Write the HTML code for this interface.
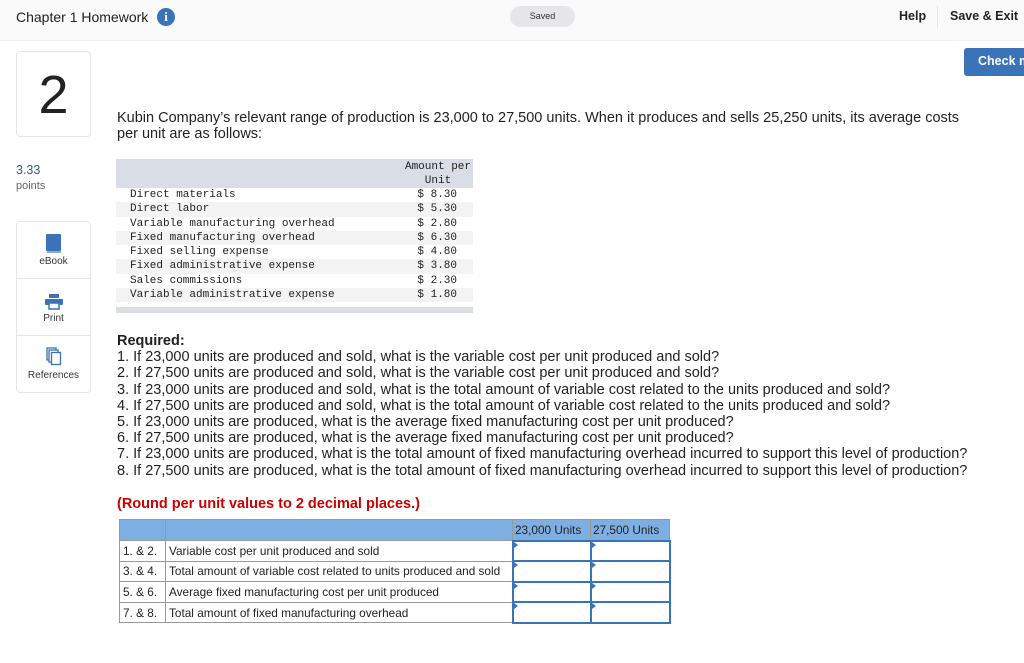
<!DOCTYPE html>
<html><head><meta charset="utf-8"><style>
*{margin:0;padding:0;box-sizing:border-box}
body{width:1024px;height:663px;background:#fff;font-family:"Liberation Sans",sans-serif;color:#222;position:relative;overflow:hidden}
.hdr{position:absolute;left:0;top:0;width:1024px;height:41px;background:#fafafa;border-bottom:1px solid #f0f0f0}
.abs{position:absolute;white-space:nowrap}
.qbox{position:absolute;left:16px;top:51px;width:75px;height:86px;border:1px solid #e6e6e6;border-radius:4px;text-align:center;font-size:54px;line-height:86px;color:#222}
.side{position:absolute;left:16px;top:221px;width:75px;height:172px;border:1px solid #e6e6e6;border-radius:4px}
.side div{height:57px;border-bottom:1px solid #e6e6e6;text-align:center;font-size:10px;color:#333;position:relative}
.side div:last-child{border-bottom:none}
.txt{font-size:14.5px;line-height:16.2px;color:#222}
.dt{position:absolute;left:116px;top:159px;width:357px;font-family:"Liberation Mono",monospace;font-size:11px;color:#222}
.dt .h{height:29px;background:#d9dde6;position:relative}
.dt .r{height:14.3px;line-height:14.3px;position:relative;padding-left:14px}
.dt .r.s{background:#f3f3f3}
.dt .r span{position:absolute;right:16px}
.at{position:absolute;left:119px;top:519px;border-collapse:collapse;font-size:11.8px;font-family:"Liberation Sans",Arial,sans-serif;color:#222;table-layout:fixed}
.at td{border:1px solid #999;height:20.6px;padding:0 3px;white-space:nowrap;overflow:hidden}
.at tr.hd td{background:#7eafe3;height:21px}
.at td.in{border:2px solid #3b73b9;position:relative;background:#fff}
.at td.in:before{content:"";position:absolute;left:0;top:0;border-left:4px solid #3b73b9;border-top:3px solid transparent;border-bottom:3px solid transparent}
</style></head><body>
<div class="hdr"></div>
<div class="abs" style="left:16px;top:9px;font-size:14px;color:#222">Chapter 1 Homework</div>
<div class="abs" style="left:157px;top:8px;width:18px;height:18px;border-radius:50%;background:#3b73b9;color:#fff;font-weight:bold;font-size:13px;text-align:center;line-height:18px;font-family:'Liberation Serif',serif">i</div>
<div class="abs" style="left:510px;top:6px;width:65px;height:21px;border-radius:11px;background:#e6e6e8;font-size:9px;text-align:center;line-height:21px;color:#333">Saved</div>
<div class="abs" style="left:899px;top:9px;font-size:12.5px;font-weight:bold;color:#222">Help</div>
<div class="abs" style="left:937px;top:6px;width:1px;height:22px;background:#e6e6e6"></div>
<div class="abs" style="left:950px;top:9px;font-size:12.5px;font-weight:bold;color:#222">Save &amp; Exit</div>
<div class="abs" style="left:964px;top:48px;width:70px;height:28px;background:#3b73b9;border-radius:3px;color:#fff;font-weight:bold;font-size:12.5px;line-height:27px;padding-left:14px">Check my</div>
<div class="qbox">2</div>
<div class="abs" style="left:16px;top:163px;font-size:12.5px;color:#2d5a96">3.33</div>
<div class="abs" style="left:16px;top:180px;font-size:11px;color:#666">points</div>
<div class="side">
<div><svg style="position:absolute;left:29px;top:12px" width="16" height="20" viewBox="0 0 16 20"><rect x="0" y="0" width="15" height="17" rx="1" fill="#3b73b9"/><rect x="1" y="17" width="14" height="2" fill="#3b73b9" opacity=".6"/></svg><span style="position:absolute;left:0;right:0;top:34px">eBook</span></div>
<div><svg style="position:absolute;left:28px;top:15px" width="18" height="16" viewBox="0 0 18 16"><rect x="4" y="0" width="10" height="4" fill="#3b73b9"/><rect x="0" y="5" width="18" height="6" rx="1" fill="#3b73b9"/><rect x="4" y="9" width="10" height="6" fill="#fff" stroke="#3b73b9" stroke-width="1.5"/></svg><span style="position:absolute;left:0;right:0;top:34px">Print</span></div>
<div><svg style="position:absolute;left:29px;top:11px" width="16" height="20" viewBox="0 0 16 20"><rect x="1" y="1" width="9" height="12" fill="#fff" stroke="#3b73b9" stroke-width="1.3"/><rect x="3" y="3" width="9" height="12" fill="#fff" stroke="#3b73b9" stroke-width="1.3"/><rect x="5.5" y="5.5" width="9" height="12" fill="#fff" stroke="#3b73b9" stroke-width="1.3"/></svg><span style="position:absolute;left:0;right:0;top:34px">References</span></div>
</div>
<div class="abs txt" style="left:117px;top:110px">Kubin Company’s relevant range of production is 23,000 to 27,500 units. When it produces and sells 25,250 units, its average costs<br>per unit are as follows:</div>
<div class="dt">
<div class="h"><div style="position:absolute;right:2px;top:1px;text-align:center;line-height:14px">Amount per<br>Unit</div></div>
<div class="r">Direct materials<span>$ 8.30</span></div>
<div class="r s">Direct labor<span>$ 5.30</span></div>
<div class="r">Variable manufacturing overhead<span>$ 2.80</span></div>
<div class="r s">Fixed manufacturing overhead<span>$ 6.30</span></div>
<div class="r">Fixed selling expense<span>$ 4.80</span></div>
<div class="r s">Fixed administrative expense<span>$ 3.80</span></div>
<div class="r">Sales commissions<span>$ 2.30</span></div>
<div class="r s">Variable administrative expense<span>$ 1.80</span></div>
<div style="height:5px"></div>
<div style="height:6px;background:#d9dde6"></div>
</div>
<div class="abs txt" style="left:117px;top:333px"><b>Required:</b><br>1. If 23,000 units are produced and sold, what is the variable cost per unit produced and sold?<br>2. If 27,500 units are produced and sold, what is the variable cost per unit produced and sold?<br>3. If 23,000 units are produced and sold, what is the total amount of variable cost related to the units produced and sold?<br>4. If 27,500 units are produced and sold, what is the total amount of variable cost related to the units produced and sold?<br>5. If 23,000 units are produced, what is the average fixed manufacturing cost per unit produced?<br>6. If 27,500 units are produced, what is the average fixed manufacturing cost per unit produced?<br>7. If 23,000 units are produced, what is the total amount of fixed manufacturing overhead incurred to support this level of production?<br>8. If 27,500 units are produced, what is the total amount of fixed manufacturing overhead incurred to support this level of production?</div>
<div class="abs txt" style="left:117px;top:496px;color:#c00;font-weight:bold">(Round per unit values to 2 decimal places.)</div>
<table class="at">
<tr class="hd"><td style="width:46px"></td><td style="width:347px"></td><td style="width:78px;padding:0 2px">23,000 Units</td><td style="width:79px;padding:0 2px">27,500 Units</td></tr>
<tr><td>1. &amp; 2.</td><td>Variable cost per unit produced and sold</td><td class="in"></td><td class="in"></td></tr>
<tr><td>3. &amp; 4.</td><td>Total amount of variable cost related to units produced and sold</td><td class="in"></td><td class="in"></td></tr>
<tr><td>5. &amp; 6.</td><td>Average fixed manufacturing cost per unit produced</td><td class="in"></td><td class="in"></td></tr>
<tr><td>7. &amp; 8.</td><td>Total amount of fixed manufacturing overhead</td><td class="in"></td><td class="in"></td></tr>
</table>
</body></html>
